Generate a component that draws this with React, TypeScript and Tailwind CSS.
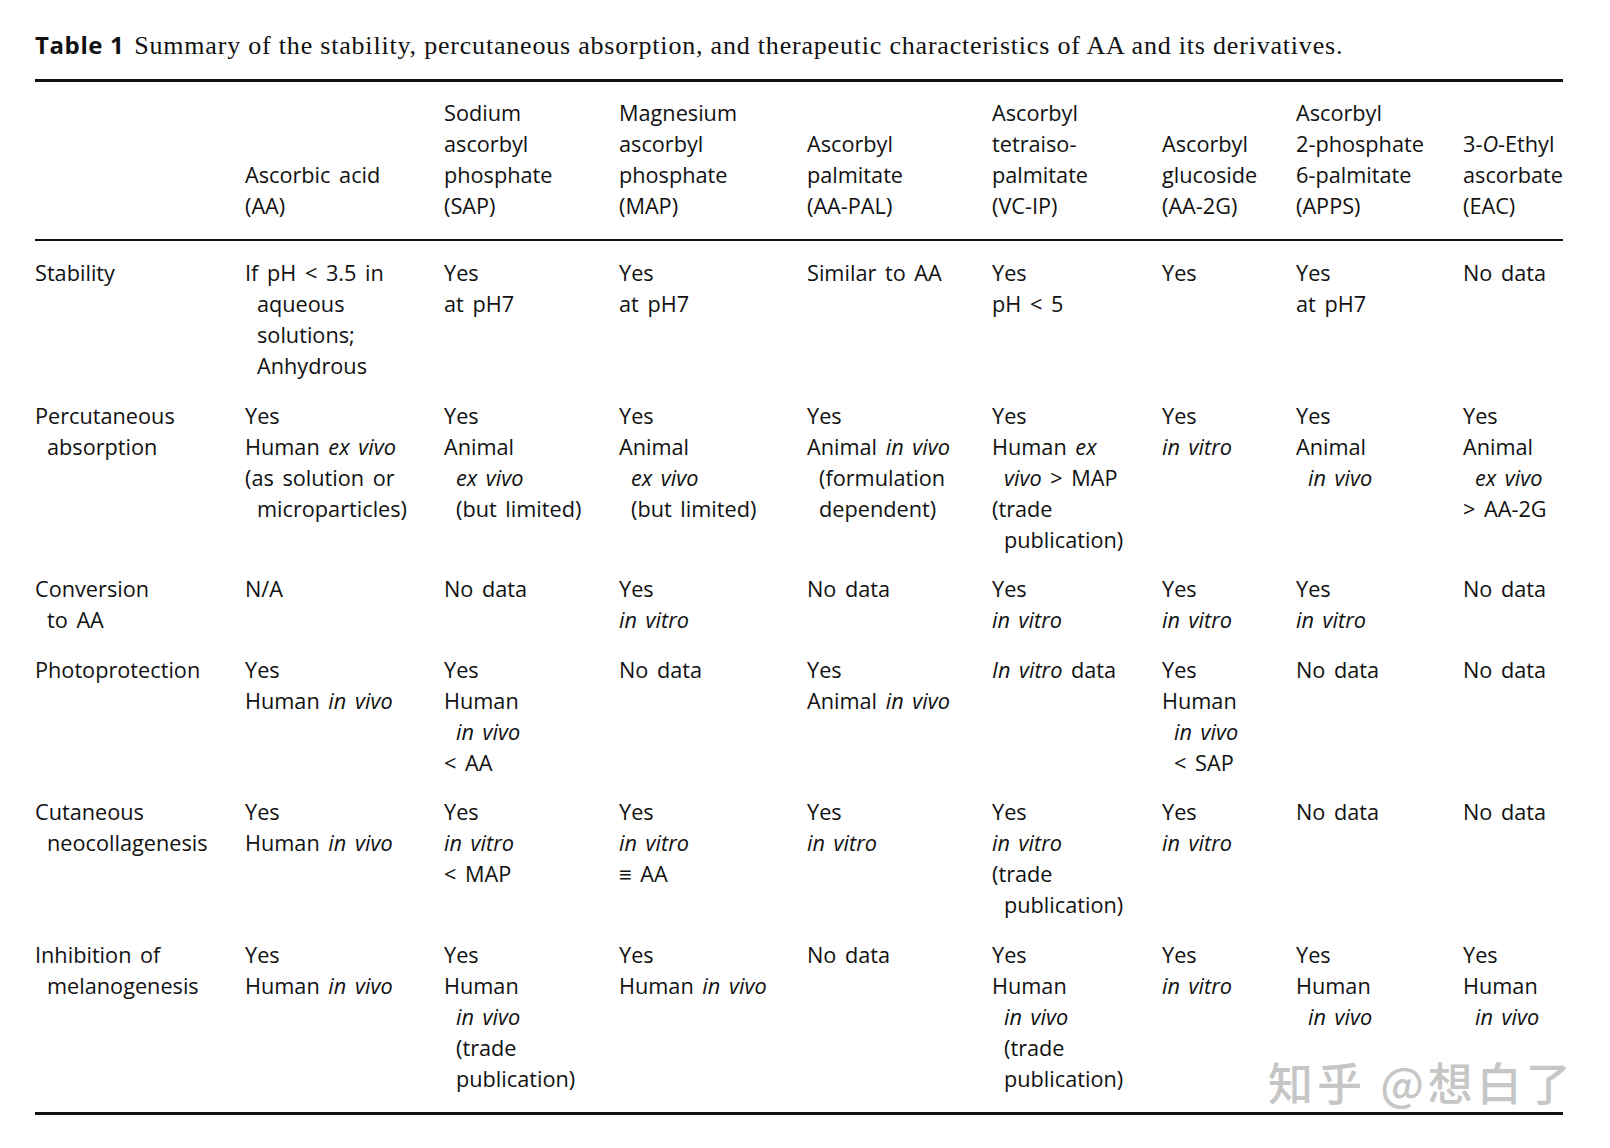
import React from "react";

const COLS =
  "grid grid-cols-[210px_199px_175px_188px_185px_170px_134px_167px_100px]";

function Line({ s }: { s: string }) {
  const indent = s.startsWith("^");
  const t = indent ? s.slice(1) : s;
  const parts = t.split("_");
  return (
    <div className={indent ? "pl-[12px] whitespace-nowrap" : "whitespace-nowrap"}>
      {parts.map((p, i) =>
        i % 2 ? (
          <i key={i} className="italic">
            {p}
          </i>
        ) : (
          <span key={i}>{p}</span>
        )
      )}
    </div>
  );
}

const header: string[][] = [
  [],
  ["Ascorbic acid", "(AA)"],
  ["Sodium", "ascorbyl", "phosphate", "(SAP)"],
  ["Magnesium", "ascorbyl", "phosphate", "(MAP)"],
  ["Ascorbyl", "palmitate", "(AA-PAL)"],
  ["Ascorbyl", "tetraiso-", "palmitate", "(VC-IP)"],
  ["Ascorbyl", "glucoside", "(AA-2G)"],
  ["Ascorbyl", "2-phosphate", "6-palmitate", "(APPS)"],
  ["3-_O_-Ethyl", "ascorbate", "(EAC)"],
];

const rows: string[][][] = [
  [
    ["Stability"],
    ["If pH < 3.5 in", "^aqueous", "^solutions;", "^Anhydrous"],
    ["Yes", "at pH7"],
    ["Yes", "at pH7"],
    ["Similar to AA"],
    ["Yes", "pH < 5"],
    ["Yes"],
    ["Yes", "at pH7"],
    ["No data"],
  ],
  [
    ["Percutaneous", "^absorption"],
    ["Yes", "Human _ex vivo_", "(as solution or", "^microparticles)"],
    ["Yes", "Animal", "^_ex vivo_", "^(but limited)"],
    ["Yes", "Animal", "^_ex vivo_", "^(but limited)"],
    ["Yes", "Animal _in vivo_", "^(formulation", "^dependent)"],
    ["Yes", "Human _ex_", "^_vivo_ > MAP", "(trade", "^publication)"],
    ["Yes", "_in vitro_"],
    ["Yes", "Animal", "^_in vivo_"],
    ["Yes", "Animal", "^_ex vivo_", "> AA-2G"],
  ],
  [
    ["Conversion", "^to AA"],
    ["N/A"],
    ["No data"],
    ["Yes", "_in vitro_"],
    ["No data"],
    ["Yes", "_in vitro_"],
    ["Yes", "_in vitro_"],
    ["Yes", "_in vitro_"],
    ["No data"],
  ],
  [
    ["Photoprotection"],
    ["Yes", "Human _in vivo_"],
    ["Yes", "Human", "^_in vivo_", "< AA"],
    ["No data"],
    ["Yes", "Animal _in vivo_"],
    ["_In vitro_ data"],
    ["Yes", "Human", "^_in vivo_", "^< SAP"],
    ["No data"],
    ["No data"],
  ],
  [
    ["Cutaneous", "^neocollagenesis"],
    ["Yes", "Human _in vivo_"],
    ["Yes", "_in vitro_", "< MAP"],
    ["Yes", "_in vitro_", "≡ AA"],
    ["Yes", "_in vitro_"],
    ["Yes", "_in vitro_", "(trade", "^publication)"],
    ["Yes", "_in vitro_"],
    ["No data"],
    ["No data"],
  ],
  [
    ["Inhibition of", "^melanogenesis"],
    ["Yes", "Human _in vivo_"],
    ["Yes", "Human", "^_in vivo_", "^(trade", "^publication)"],
    ["Yes", "Human _in vivo_"],
    ["No data"],
    ["Yes", "Human", "^_in vivo_", "^(trade", "^publication)"],
    ["Yes", "_in vitro_"],
    ["Yes", "Human", "^_in vivo_"],
    ["Yes", "Human", "^_in vivo_"],
  ],
];

export default function App() {
  return (
    <div className="relative w-[1610px] h-[1148px] bg-white text-[#111111] overflow-hidden">
      <div className="w-[1528px] ml-[35px] pt-[29px]">
        <div className="flex items-baseline h-[32px] leading-[32px] whitespace-nowrap">
          <span className="font-['Open_Sans',sans-serif] font-bold text-[24px] tracking-[0.6px] mr-[10px]">
            Table 1
          </span>
          <span className="font-['Liberation_Serif',serif] text-[26px] tracking-[0.8px]">
            Summary of the stability, percutaneous absorption, and therapeutic characteristics of AA and its derivatives.
          </span>
        </div>
        <div className="mt-[18px] h-[3px] bg-[#111111]" />
        <div className="font-['Open_Sans',sans-serif] font-normal text-[21.7px] leading-[31px] [word-spacing:3px]">
          <div className={`${COLS} pt-[15px] pb-[18px] border-b-2 border-[#111111]`}>
            {header.map((cell, i) => (
              <div key={i} className="flex flex-col justify-end">
                {cell.map((s, j) => (
                  <Line key={j} s={s} />
                ))}
              </div>
            ))}
          </div>
          <div className="flex flex-col gap-[18.5px] pt-[16px] pb-[18px]">
            {rows.map((row, r) => (
              <div key={r} className={COLS}>
                {row.map((cell, c) => (
                  <div key={c} className="flex flex-col">
                    {cell.map((s, j) => (
                      <Line key={j} s={s} />
                    ))}
                  </div>
                ))}
              </div>
            ))}
          </div>
          <div className="h-[3px] bg-[#111111]" />
        </div>
      </div>
      <div className="absolute left-[1268px] top-[1052px] font-['Noto_Sans_CJK_SC',sans-serif] text-[45px] leading-[60px] font-medium tracking-[4px] text-[#c6c6c6] whitespace-nowrap">
        知乎 @想白了
      </div>
    </div>
  );
}
